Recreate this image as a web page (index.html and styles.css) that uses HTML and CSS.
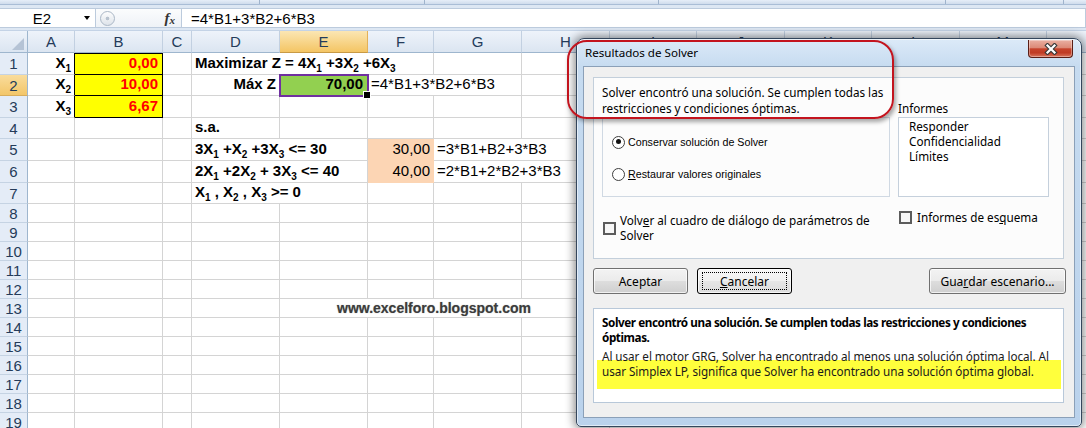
FILE: index.html
```
<!DOCTYPE html>
<html lang="es">
<head>
<meta charset="utf-8">
<title>Resultados de Solver</title>
<link rel="stylesheet" href="styles.css">
</head>
<body>
<div class="ribbon-edge"><span class="seg1"></span><span class="seg2"></span><span class="seg3"></span><span class="seg4"></span><span class="seg5"></span></div>
<div class="fbar">
  <div class="namebox"><span class="ref">E2</span><span class="dd"></span></div>
  <div class="fxzone"><span class="grip"></span><span class="fx">f<sub>x</sub></span></div>
  <div class="finput">=4*B1+3*B2+6*B3</div>
</div>
<div class="sheet">
  <div class="ch corner"></div><div class="ch">A</div><div class="ch">B</div><div class="ch">C</div><div class="ch">D</div><div class="ch sel">E</div><div class="ch">F</div><div class="ch">G</div><div class="ch">H</div><div class="ch">I</div><div class="ch">J</div><div class="ch">K</div><div class="ch">L</div><div class="ch">M</div><div class="ch"></div>

  <div class="rh">1</div><div class="c b r lb"><span>X<sub>1</sub></span></div><div class="c yb top"><span>0,00</span></div><div class="c"></div><div class="c b s3"><span>Maximizar Z = 4X<sub>1</sub> +3X<sub>2</sub> +6X<sub>3</sub></span></div><div class="c"></div><div class="c"></div><div class="c f"></div>

  <div class="rh sel">2</div><div class="c b r lb"><span>X<sub>2</sub></span></div><div class="c yb"><span>10,00</span></div><div class="c"></div><div class="c b r"><span>Máx Z</span></div><div class="c g"><span>70,00</span></div><div class="c s2"><span>=4*B1+3*B2+6*B3</span></div><div class="c"></div><div class="c f"></div>

  <div class="rh">3</div><div class="c b r lb"><span>X<sub>3</sub></span></div><div class="c yb"><span>6,67</span></div><div class="c"></div><div class="c"></div><div class="c"></div><div class="c"></div><div class="c"></div><div class="c"></div><div class="c f"></div>

  <div class="rh">4</div><div class="c"></div><div class="c"></div><div class="c"></div><div class="c b"><span>s.a.</span></div><div class="c"></div><div class="c"></div><div class="c"></div><div class="c"></div><div class="c f"></div>

  <div class="rh">5</div><div class="c"></div><div class="c"></div><div class="c"></div><div class="c b s2"><span>3X<sub>1</sub> +X<sub>2</sub> +3X<sub>3</sub> &lt;= 30</span></div><div class="c pe r"><span>30,00</span></div><div class="c s2"><span>=3*B1+B2+3*B3</span></div><div class="c f"></div>

  <div class="rh">6</div><div class="c"></div><div class="c"></div><div class="c"></div><div class="c b s2"><span>2X<sub>1</sub> +2X<sub>2</sub> + 3X<sub>3</sub> &lt;= 40</span></div><div class="c pe r"><span>40,00</span></div><div class="c s2"><span>=2*B1+2*B2+3*B3</span></div><div class="c f"></div>

  <div class="rh">7</div><div class="c"></div><div class="c"></div><div class="c"></div><div class="c b s2"><span>X<sub>1</sub> , X<sub>2</sub> , X<sub>3</sub> &gt;= 0</span></div><div class="c"></div><div class="c"></div><div class="c"></div><div class="c f"></div>

  <div class="rh">8</div><div class="c"></div><div class="c"></div><div class="c"></div><div class="c"></div><div class="c"></div><div class="c"></div><div class="c"></div><div class="c"></div><div class="c f"></div>
  <div class="rh">9</div><div class="c"></div><div class="c"></div><div class="c"></div><div class="c"></div><div class="c"></div><div class="c"></div><div class="c"></div><div class="c"></div><div class="c f"></div>
  <div class="rh">10</div><div class="c"></div><div class="c"></div><div class="c"></div><div class="c"></div><div class="c"></div><div class="c"></div><div class="c"></div><div class="c"></div><div class="c f"></div>
  <div class="rh">11</div><div class="c"></div><div class="c"></div><div class="c"></div><div class="c"></div><div class="c"></div><div class="c"></div><div class="c"></div><div class="c"></div><div class="c f"></div>
  <div class="rh">12</div><div class="c"></div><div class="c"></div><div class="c"></div><div class="c"></div><div class="c"></div><div class="c"></div><div class="c"></div><div class="c"></div><div class="c f"></div>
  <div class="rh">13</div><div class="c"></div><div class="c"></div><div class="c"></div><div class="c"></div><div class="c s4 wm"><span>www.excelforo.blogspot.com</span></div><div class="c f"></div>
  <div class="rh">14</div><div class="c"></div><div class="c"></div><div class="c"></div><div class="c"></div><div class="c"></div><div class="c"></div><div class="c"></div><div class="c"></div><div class="c f"></div>
  <div class="rh">15</div><div class="c"></div><div class="c"></div><div class="c"></div><div class="c"></div><div class="c"></div><div class="c"></div><div class="c"></div><div class="c"></div><div class="c f"></div>
  <div class="rh">16</div><div class="c"></div><div class="c"></div><div class="c"></div><div class="c"></div><div class="c"></div><div class="c"></div><div class="c"></div><div class="c"></div><div class="c f"></div>
  <div class="rh">17</div><div class="c"></div><div class="c"></div><div class="c"></div><div class="c"></div><div class="c"></div><div class="c"></div><div class="c"></div><div class="c"></div><div class="c f"></div>
  <div class="rh">18</div><div class="c"></div><div class="c"></div><div class="c"></div><div class="c"></div><div class="c"></div><div class="c"></div><div class="c"></div><div class="c"></div><div class="c f"></div>
  <div class="rh">19</div><div class="c"></div><div class="c"></div><div class="c"></div><div class="c"></div><div class="c"></div><div class="c"></div><div class="c"></div><div class="c"></div><div class="c f"></div>
</div>

<div class="dlg">
  <div class="titlebar">
    <span class="title">Resultados de Solver</span>
    <span class="close"><svg width="14" height="12" viewBox="0 0 14 12"><path d="M3.5 2.5 L10.5 9.5 M10.5 2.5 L3.5 9.5" stroke="#3a3a3a" stroke-width="4.4" stroke-linecap="square" fill="none"/><path d="M3.5 2.5 L10.5 9.5 M10.5 2.5 L3.5 9.5" stroke="#ffffff" stroke-width="2.2" stroke-linecap="square" fill="none"/></svg></span>
  </div>
  <div class="client">
    <div class="topbox">
      <div class="leftcol">
        <p class="msg">Solver encontró una solución. Se cumplen todas las<br>restricciones y condiciones óptimas.</p>
        <div class="group">
          <div class="radio"><span class="rb on"></span>Conservar solución de Solver</div>
          <div class="radio"><span class="rb"></span><u>R</u>estaurar valores originales</div>
        </div>
        <div class="check chk1"><span class="cb"></span><span>Volv<u>e</u>r al cuadro de diálogo de parámetros de<br>Solver</span></div>
      </div>
      <div class="rightcol">
        <div class="inf-label">Informes</div>
        <div class="listbox">
          <div>Responder</div>
          <div>Confidencialidad</div>
          <div>Límites</div>
        </div>
        <div class="check chk2"><span class="cb"></span><span>Informes de es<u>q</u>uema</span></div>
      </div>
    </div>
    <div class="btns">
      <span class="btn">Aceptar</span>
      <span class="btn def"><u>C</u>ancelar</span>
      <span class="btn wide">Gua<u>r</u>dar escenario...</span>
    </div>
    <div class="infobox">
      <span class="hl"></span>
      <p class="strong">Solver encontró una solución. Se cumplen todas las restricciones y condiciones<br>óptimas.</p>
      <p class="norm">Al usar el motor GRG, Solver ha encontrado al menos una solución óptima local. Al<br>usar Simplex LP, significa que Solver ha encontrado una solución óptima global.</p>
    </div>
  </div>
</div>
<div class="annot"></div>
</body>
</html>
```
FILE: styles.css
```
* { box-sizing: border-box; }
html, body { margin: 0; padding: 0; }
body {
  width: 1086px;
  height: 428px;
  overflow: hidden;
  position: relative;
  background: #fff;
  font-family: "Liberation Sans", Arial, sans-serif;
  color: #000;
}

/* ribbon bottom edge */
.ribbon-edge {
  display: flex;
  height: 5px;
  background: linear-gradient(#e6eef8, #cfdcec);
  border-bottom: 1px solid #a9bdd6;
}
.ribbon-edge span { border-right: 1px solid #9fb3cc; height: 4px; }
.seg1 { width: 260px; }
.seg2 { width: 165px; }
.seg3 { width: 234px; }
.seg4 { width: 287px; }
.seg5 { width: 118px; }

/* formula bar */
.fbar {
  display: flex;
  height: 26px;
  padding: 3px 0 2px;
  background: #dde7f3;
  border-bottom: 1px solid #c4d3e6;
}
.namebox {
  width: 96px;
  height: 20px;
  background: #fff;
  display: flex;
  align-items: center;
  border: 1px solid #bccbdd;
  border-left: none;
}
.ref { width: 84px; text-align: center; font-size: 15px; }
.dd {
  width: 0; height: 0;
  border-left: 3.5px solid transparent;
  border-right: 3.5px solid transparent;
  border-top: 4px solid #000;
}
.fxzone {
  width: 85px;
  height: 20px;
  display: flex;
  align-items: center;
  justify-content: space-between;
  padding: 0 6px 0 4px;
  background: linear-gradient(#fbfcfd, #eef2f7);
  border-top: 1px solid #bccbdd;
  border-bottom: 1px solid #bccbdd;
}
.grip {
  width: 15px; height: 15px;
  border-radius: 50%;
  border: 1px solid #aab7c6;
  background: radial-gradient(circle, #b9c3cf 0 1.5px, transparent 2.2px), linear-gradient(#fdfdfd, #dde3ea);
}
.fx {
  font-family: "Liberation Serif", serif;
  font-style: italic;
  font-weight: bold;
  font-size: 15px;
  color: #333;
}
.fx sub { font-size: 11px; vertical-align: -1px; line-height: 0; }
.finput {
  flex: 1;
  height: 20px;
  background: #fff;
  border: 1px solid #bccbdd;
  display: flex;
  align-items: center;
  padding-left: 9px;
  font-size: 15px;
}

/* sheet */
.sheet {
  display: grid;
  grid-template-columns: 28px 47px 88px 29px 88px 88px 66px 88px 88px 87.4px 87.4px 87.4px 87.4px 87.4px 87.4px;
  grid-template-rows: 22px 22px 21px 22px 21px 22px 22px 21px repeat(12, 19px);
  width: 1138px;
}
.ch {
  background: linear-gradient(#eef3fa, #dbe5f1);
  border-right: 1px solid #c2d0e1;
  border-bottom: 1px solid #9eb6ce;
  display: flex;
  align-items: center;
  justify-content: center;
  font-size: 15px;
  color: #243b5a;
}
.ch.sel {
  background: linear-gradient(#fbe6b3, #f4c564);
  border-right-color: #e2b15a;
  border-bottom-color: #c89a45;
}
.corner { position: relative; border-right-color: #9eb6ce; }
.corner::after {
  content: "";
  position: absolute;
  right: 3px;
  bottom: 2px;
  border-left: 12px solid transparent;
  border-bottom: 12px solid #b5c3d5;
}
.rh {
  background: #e4ecf7;
  border-right: 1px solid #9eb6ce;
  border-bottom: 1px solid #c5d3e3;
  display: flex;
  align-items: center;
  justify-content: center;
  font-size: 15px;
  color: #243b5a;
}
.rh.sel { background: linear-gradient(#f9dc9c, #f3c669); border-bottom-color: #d8ad5c; }

.c {
  border-right: 1px solid #d4d4d4;
  border-bottom: 1px solid #d4d4d4;
  display: flex;
  align-items: flex-end;
  padding: 0 3px 3px;
  font-size: 15px;
  line-height: 17px;
  white-space: nowrap;
  min-width: 0;
}
.c > span { white-space: pre; }
.c sub { font-size: 10px; line-height: 0; vertical-align: -4px; }
.b { font-weight: bold; }
.r { justify-content: flex-end; }
.s2 { grid-column: span 2; }
.s3 { grid-column: span 3; }
.s4 { grid-column: span 4; }
.f { grid-column: 10 / -1; }
.lb { border-right-color: #000; }
.yb {
  background: #ffff00;
  border-right-color: #000;
  border-bottom-color: #000;
  color: #ff0000;
  font-weight: bold;
  justify-content: flex-end;
  padding-right: 4px;
}
.yb.top { box-shadow: inset 0 1px 0 #000; }
.g {
  background: #92d050;
  border-color: #92d050;
  font-weight: bold;
  justify-content: flex-end;
  padding-right: 4px;
  outline: 2px solid #7030a0;
  outline-offset: -1px;
  position: relative;
  z-index: 2;
}
.g::after {
  content: "";
  position: absolute;
  right: -4px;
  bottom: -4px;
  width: 6px;
  height: 6px;
  background: #000;
  border: 1px solid #fff;
}
.pe { background: #fcd5b4; border-color: #fcd5b4; }
.wm {
  padding-left: 57px;
  padding-bottom: 0;
  line-height: 17px;
  font-weight: bold;
  font-size: 14px;
  color: #3c3c3c;
  text-shadow: 0 0 1px rgba(60,60,60,.5);
}

/* dialog */
.dlg {
  position: absolute;
  left: 576px;
  top: 38px;
  width: 506px;
  height: 389px;
  border: 1px solid #34465c;
  border-radius: 8px 8px 5px 5px;
  background: linear-gradient(180deg, #dceaf8 0, #c6dbf0 28px, #bad2ec 100%);
  box-shadow: 0 0 10px 2px rgba(0,0,0,.45), inset 0 0 0 1px rgba(255,255,255,.55);
  padding: 0 6px 8px;
  display: flex;
  flex-direction: column;
  font-family: "Noto Sans", "Open Sans", sans-serif;
  font-size: 11.7px;
  z-index: 5;
}
.titlebar {
  height: 27px;
  display: flex;
  align-items: center;
  padding-left: 2px;
}
.title { font-size: 11.6px; color: #000; }
.close {
  margin-left: auto;
  margin-right: 2px;
  align-self: flex-start;
  margin-top: 1px;
  width: 45px;
  height: 18px;
  border: 1px solid #5a1e16;
  border-top: none;
  border-radius: 0 0 4px 4px;
  background: linear-gradient(#eab0a2 0%, #dc8a77 45%, #c6442c 52%, #c03b24 75%, #d9765e 100%);
  box-shadow: inset 0 0 0 1px rgba(255,255,255,.35);
  display: flex;
  align-items: center;
  justify-content: center;
}
.client {
  flex: 1;
  background: #f0f0f0;
  border: 1px solid #8ba0b8;
  padding: 10px 10px 0 9px;
  display: flex;
  flex-direction: column;
}
.topbox {
  height: 182px;
  background: #fcfcfc;
  border: 1px solid #c3cfdb;
  padding: 7px 14px 0 8px;
  display: grid;
  grid-template-columns: 288px 151px;
  column-gap: 8px;
  align-items: start;
}
.leftcol, .rightcol { display: flex; flex-direction: column; }
.msg { margin: 0; line-height: 15.5px; height: 31px; white-space: nowrap; }
.group {
  margin-top: 1px;
  height: 80px;
  border: 1px solid #d0d9e3;
  padding: 0 0 0 9px;
}
.radio {
  margin-top: 16px;
  height: 16px;
  display: flex;
  align-items: center;
  font-family: "Liberation Sans", Arial, sans-serif;
  font-size: 10.7px;
}
.rb {
  width: 13px; height: 13px;
  border-radius: 50%;
  border: 1.5px solid #3e3e3e;
  background: #fff;
  margin-right: 3px;
  position: relative;
  flex: none;
}
.rb.on::after {
  content: "";
  position: absolute;
  left: 2.5px; top: 2.5px;
  width: 5px; height: 5px;
  border-radius: 50%;
  background: #111;
}
.check { display: flex; align-items: center; line-height: 15px; white-space: nowrap; }
.cb {
  width: 13px; height: 13px;
  border: 2px solid #5c5c5c;
  background: #f7f7f7;
  flex: none;
}
.chk1 { margin-top: 16px; margin-left: 1px; }
.chk1 .cb { margin-right: 4px; }
.chk2 { margin-top: 12.5px; margin-left: 1px; }
.chk2 .cb { margin-right: 5px; }
.inf-label { margin-top: 15px; line-height: 16px; }
.listbox {
  margin-top: 1px;
  height: 80px;
  background: #fff;
  border: 1px solid #c5d0dc;
  padding: 1px 0 0 10px;
  line-height: 15px;
}
.btns {
  display: flex;
  margin-top: 9px;
  margin-right: -2px;
  height: 26px;
}
.btn {
  width: 95px;
  height: 26px;
  border: 1px solid #707070;
  border-radius: 3px;
  background: linear-gradient(#f3f3f3 0%, #ebebeb 48%, #dddddd 52%, #cfcfcf 100%);
  box-shadow: inset 0 0 0 1px rgba(255,255,255,.7);
  display: flex;
  align-items: center;
  justify-content: center;
  font-size: 12px;
  position: relative;
}
.btn.def {
  margin-left: 9px;
  border-color: #000;
  background: linear-gradient(#f7f7f7 0%, #f0f0f0 48%, #e6e6e6 52%, #dcdcdc 100%);
}
.btn.def::after {
  content: "";
  position: absolute;
  inset: 3px 4px;
  border: 1px dotted #000;
}
.btn.wide { width: 137px; margin-left: auto; }
.infobox {
  margin-top: 14px;
  height: 95px;
  background: #fff;
  border: 1px solid #b8c8d9;
  padding: 6px 8px 0;
  position: relative;
  line-height: 15px;
}
.infobox p { margin: 0; position: relative; z-index: 1; white-space: nowrap; }
.infobox .strong { font-weight: bold; letter-spacing: -0.42px; }
.infobox .norm { margin-top: 4px; color: #1a1a1a; letter-spacing: -0.05px; }
.hl {
  position: absolute;
  left: 3px;
  top: 51px;
  width: 464px;
  height: 29px;
  background: #ffff3c;
  z-index: 0;
}

/* red annotation */
.annot {
  position: absolute;
  left: 567px;
  top: 40px;
  width: 327px;
  height: 79px;
  border: 2px solid #c3141e;
  border-radius: 20px;
  box-shadow: 2px 3px 4px rgba(0,0,0,.35);
  z-index: 10;
}
```
